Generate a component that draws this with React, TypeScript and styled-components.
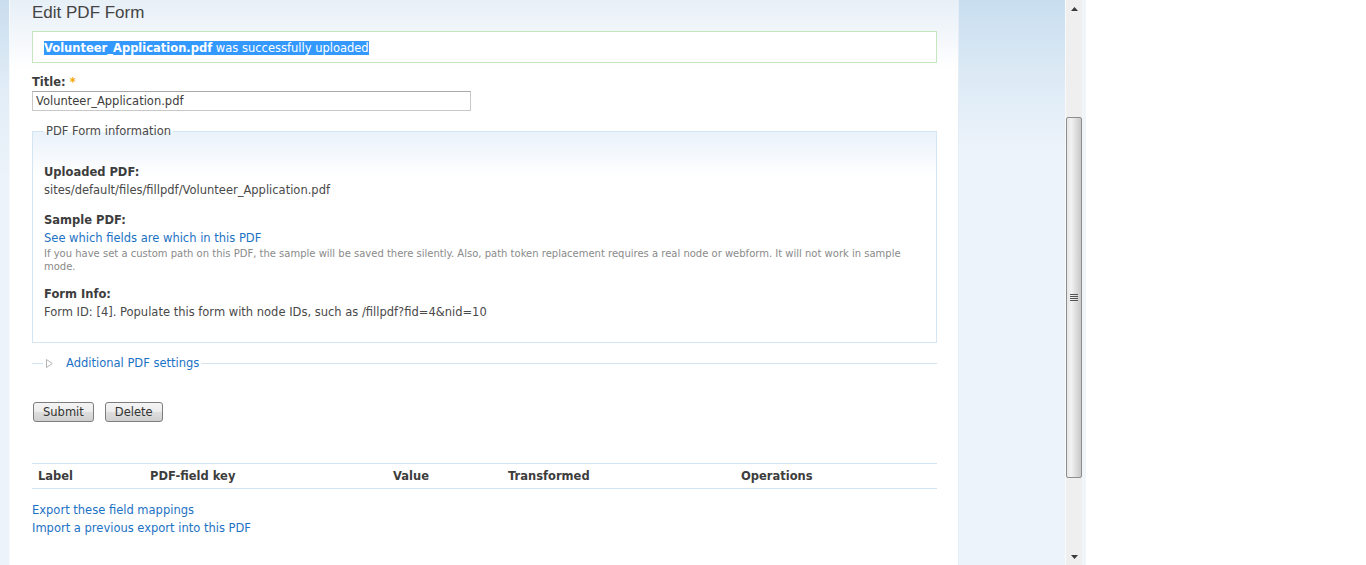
import React from "react";
import styled, { createGlobalStyle } from "styled-components";

const Global = createGlobalStyle`
  html, body { margin: 0; padding: 0; background: #fff; overflow: hidden; }
  body { font-family: "DejaVu Sans", Verdana, sans-serif; font-size: 11.5px; color: #494949; }
  * { box-sizing: border-box; }
`;

const Page = styled.div`
  display: flex;
  width: 1366px;
  height: 565px;
  overflow: hidden;
`;

const LeftStrip = styled.div`
  width: 10px;
  flex: none;
  background: linear-gradient(to bottom, #c9ddee 0px, #e2edf7 90px, #ecf3fa 180px);
  border-right: 1px solid #f6fafd;
`;

const Main = styled.main`
  width: 949px;
  flex: none;
  padding: 2px 21px 0 22px;
  background: linear-gradient(to bottom, #e7eff7 0px, #ffffff 70px);
  border-right: 1px solid #e4edf5;
`;

const RightArea = styled.div`
  width: 106px;
  flex: none;
  background: linear-gradient(to bottom, #c8deef 0px, #dbe9f5 70px, #ecf3fb 150px);
`;

const Rest = styled.div`
  flex: 1;
  background: #fff;
`;

const Title = styled.h2`
  margin: 0;
  font-family: "Liberation Sans", Arial, sans-serif;
  font-weight: normal;
  font-size: 17px;
  line-height: 22px;
  color: #444;
`;

const Message = styled.div`
  margin-top: 7px;
  border: 1px solid #c4e7be;
  background: #fff;
  padding: 9px 11px 7px 11px;
  line-height: 14px;
  color: #494949;
`;

const Selected = styled.span`
  background: #3399ff;
  color: #fff;
`;

const FormItem = styled.div<{ $top?: number }>`
  margin-top: ${(p) => p.$top ?? 0}px;
`;

const Label = styled.label`
  display: block;
  font-weight: bold;
  line-height: 18px;
  color: #3d3d3d;
`;

const Required = styled.span`
  color: #f0a800;
  font-weight: bold;
`;

const TextInput = styled.input`
  display: block;
  width: 439px;
  height: 20px;
  margin-top: 0;
  padding: 0 3px;
  border: 1px solid #c8c8c8;
  border-top-color: #a9a9a9;
  font-family: "DejaVu Sans", Verdana, sans-serif;
  font-size: 11.5px;
  color: #3d3d3d;
  background: #fff;
  outline: none;
`;

const Fieldset = styled.fieldset`
  margin: 13px 0 0 0;
  padding: 25px 11px 21px 11px;
  border: 1px solid #d3e4f2;
  background: linear-gradient(to bottom, #eaf2fa 0px, #ffffff 45px);
  min-width: 0;
`;

const Legend = styled.legend`
  padding: 0 2px;
  line-height: 14px;
  color: #494949;
`;

const Value = styled.div`
  line-height: 18px;
`;

const Link = styled.a`
  color: #1c72c4;
  text-decoration: none;
  line-height: 18px;
`;

const BlockLink = styled(Link)`
  display: block;
`;

const Description = styled.div`
  margin-top: 0;
  font-size: 10px;
  line-height: 13px;
  color: #8a8a8a;
`;

const Collapsed = styled.fieldset`
  margin: 11px 0 0 0;
  padding: 0 11px;
  border: 0;
  border-top: 1px solid #d3e4f2;
  min-width: 0;
`;

const CollapsedLegend = styled.legend`
  padding: 0 2px 0 3px;
  line-height: 14px;
  display: flex;
  align-items: center;
`;

const Arrow = styled.svg`
  width: 7px;
  height: 9px;
  margin-right: 13px;
`;

const Actions = styled.div`
  display: flex;
  gap: 11px;
  margin-top: 30px;
  padding-left: 1px;
`;

const Button = styled.button`
  height: 20px;
  padding: 0 9px;
  border: 1px solid #7d7d7d;
  border-radius: 3px;
  background: linear-gradient(to bottom, #f4f4f4 0%, #ececec 50%, #dedede 50%, #d0d0d0 100%);
  font-family: "DejaVu Sans", Verdana, sans-serif;
  font-size: 11.5px;
  color: #333;
  line-height: 16px;
`;

const Table = styled.div`
  margin-top: 41px;
  border-top: 1px solid #d3e4f2;
  border-bottom: 1px solid #d3e4f2;
  display: grid;
  grid-template-columns: 112px 243px 115px 233px 1fr;
`;

const Th = styled.div`
  padding: 3px 6px;
  font-weight: bold;
  line-height: 18px;
  color: #3d3d3d;
`;

const Links = styled.div`
  margin-top: 12px;
`;

/* Scrollbar drawing */
const ScrollTrack = styled.div`
  width: 17px;
  flex: none;
  display: flex;
  flex-direction: column;
  background: #efefef;
  border-left: 1px solid #fafafa;
`;

const ScrollButton = styled.div`
  height: 17px;
  flex: none;
  display: flex;
  align-items: center;
  justify-content: center;
`;

const ScrollSpacer = styled.div<{ $h?: number }>`
  flex: ${(p) => (p.$h !== undefined ? `0 0 ${p.$h}px` : "1")};
`;

const Thumb = styled.div`
  height: 361px;
  flex: none;
  border: 1px solid #8e8e8e;
  border-radius: 2px;
  background: linear-gradient(to right, #e6e6e6 0%, #f2f2f2 30%, #dadada 70%, #c8c8c8 100%);
  display: flex;
  align-items: center;
  justify-content: center;
`;

const Grip = styled.svg`
  width: 8px;
  height: 8px;
`;

const GapStrip = styled.div`
  width: 4px;
  flex: none;
  background: #f0f5fa;
`;

export default function App() {
  return (
    <Page>
      <Global />
      <LeftStrip />
      <Main>
        <Title>Edit PDF Form</Title>
        <Message>
          <Selected>
            <strong>Volunteer_Application.pdf</strong> was successfully uploaded
          </Selected>
        </Message>

        <FormItem $top={10}>
          <Label htmlFor="title">
            Title: <Required>*</Required>
          </Label>
          <TextInput id="title" defaultValue="Volunteer_Application.pdf" />
        </FormItem>

        <Fieldset>
          <Legend>PDF Form information</Legend>
          <FormItem>
            <Label>Uploaded PDF:</Label>
            <Value>sites/default/files/fillpdf/Volunteer_Application.pdf</Value>
          </FormItem>
          <FormItem $top={12}>
            <Label>Sample PDF:</Label>
            <BlockLink href="#">See which fields are which in this PDF</BlockLink>
            <Description>
              If you have set a custom path on this PDF, the sample will be saved there silently. Also, path token
              replacement requires a real node or webform. It will not work in sample mode.
            </Description>
          </FormItem>
          <FormItem $top={12}>
            <Label>Form Info:</Label>
            <Value>Form ID: [4]. Populate this form with node IDs, such as /fillpdf?fid=4&amp;nid=10</Value>
          </FormItem>
        </Fieldset>

        <Collapsed>
          <CollapsedLegend>
            <Arrow viewBox="0 0 7 9">
              <polygon points="0.5,0.5 6.3,4.5 0.5,8.5" fill="#fff" stroke="#b4b4b4" strokeWidth="1" />
            </Arrow>
            <Link href="#">Additional PDF settings</Link>
          </CollapsedLegend>
        </Collapsed>

        <Actions>
          <Button>Submit</Button>
          <Button>Delete</Button>
        </Actions>

        <Table>
          <Th>Label</Th>
          <Th>PDF-field key</Th>
          <Th>Value</Th>
          <Th>Transformed</Th>
          <Th>Operations</Th>
        </Table>

        <Links>
          <BlockLink href="#">Export these field mappings</BlockLink>
          <BlockLink href="#">Import a previous export into this PDF</BlockLink>
        </Links>
      </Main>
      <RightArea />
      <ScrollTrack>
        <ScrollButton>
          <svg width="7" height="4" viewBox="0 0 7 4">
            <polygon points="3.5,0 7,4 0,4" fill="#3a3a3a" />
          </svg>
        </ScrollButton>
        <ScrollSpacer $h={100} />
        <Thumb>
          <Grip viewBox="0 0 8 8">
            <rect x="0" y="0" width="8" height="1" fill="#555" />
            <rect x="0" y="2" width="8" height="1" fill="#555" />
            <rect x="0" y="4" width="8" height="1" fill="#555" />
            <rect x="0" y="6" width="8" height="1" fill="#555" />
          </Grip>
        </Thumb>
        <ScrollSpacer />
        <ScrollButton>
          <svg width="7" height="4" viewBox="0 0 7 4">
            <polygon points="0,0 7,0 3.5,4" fill="#3a3a3a" />
          </svg>
        </ScrollButton>
      </ScrollTrack>
      <GapStrip />
      <Rest />
    </Page>
  );
}
